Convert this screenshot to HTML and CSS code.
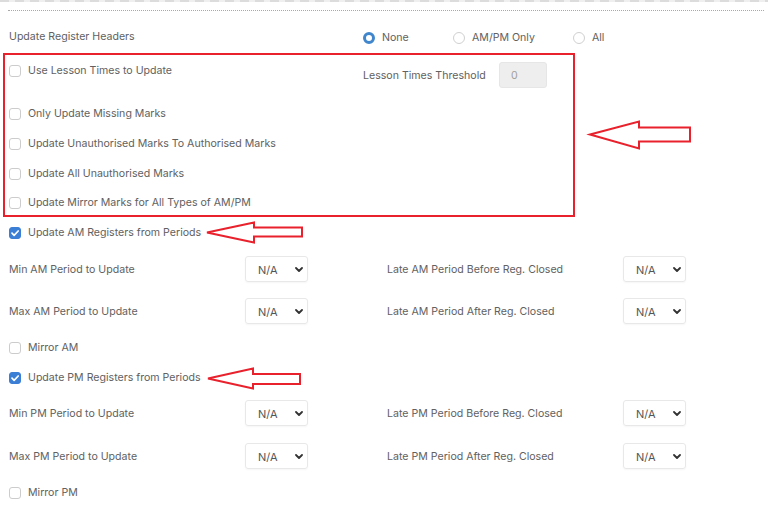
FILE: index.html
```html
<!DOCTYPE html>
<html>
<head>
<meta charset="utf-8">
<link rel="stylesheet" href="styles.css">
</head>
<body>
<div class="page">
  <div class="stripe"></div>
  <div class="rule"></div>

  <div class="row header-row">
    <span class="label">Update Register Headers</span>
    <div class="radios">
      <label class="radio-opt"><span class="radio checked"></span>None</label>
      <label class="radio-opt"><span class="radio"></span>AM/PM Only</label>
      <label class="radio-opt"><span class="radio"></span>All</label>
    </div>
  </div>

  <div class="group">
    <div class="row lesson-row">
      <label class="check-item"><span class="box"></span>Use Lesson Times to Update</label>
      <div class="threshold">
        <span class="label">Lesson Times Threshold</span>
        <span class="num-input">0</span>
      </div>
    </div>
    <div class="row row-check"><label class="check-item"><span class="box"></span>Only Update Missing Marks</label></div>
    <div class="row row-check"><label class="check-item"><span class="box"></span>Update Unauthorised Marks To Authorised Marks</label></div>
    <div class="row row-check"><label class="check-item"><span class="box"></span>Update All Unauthorised Marks</label></div>
    <div class="row row-check last"><label class="check-item"><span class="box"></span>Update Mirror Marks for All Types of AM/PM</label></div>
  </div>

  <div class="row row-check"><label class="check-item"><span class="box on"><svg viewBox="0 0 12 12"><path d="M3 6.2l2.1 2.1L9.2 4" /></svg></span>Update AM Registers from Periods</label></div>

  <div class="row row-select">
    <span class="label">Min AM Period to Update</span>
    <div class="select"><span>N/A</span><svg viewBox="0 0 8 5"><path d="M1 1l3 3 3-3"/></svg></div>
    <span></span>
    <span class="label">Late AM Period Before Reg. Closed</span>
    <div class="select"><span>N/A</span><svg viewBox="0 0 8 5"><path d="M1 1l3 3 3-3"/></svg></div>
  </div>
  <div class="row row-select">
    <span class="label">Max AM Period to Update</span>
    <div class="select"><span>N/A</span><svg viewBox="0 0 8 5"><path d="M1 1l3 3 3-3"/></svg></div>
    <span></span>
    <span class="label">Late AM Period After Reg. Closed</span>
    <div class="select"><span>N/A</span><svg viewBox="0 0 8 5"><path d="M1 1l3 3 3-3"/></svg></div>
  </div>

  <div class="row row-check mirror"><label class="check-item"><span class="box"></span>Mirror AM</label></div>

  <div class="row row-check pm"><label class="check-item"><span class="box on"><svg viewBox="0 0 12 12"><path d="M3 6.2l2.1 2.1L9.2 4" /></svg></span>Update PM Registers from Periods</label></div>

  <div class="row row-select">
    <span class="label">Min PM Period to Update</span>
    <div class="select"><span>N/A</span><svg viewBox="0 0 8 5"><path d="M1 1l3 3 3-3"/></svg></div>
    <span></span>
    <span class="label">Late PM Period Before Reg. Closed</span>
    <div class="select"><span>N/A</span><svg viewBox="0 0 8 5"><path d="M1 1l3 3 3-3"/></svg></div>
  </div>
  <div class="row row-select tall">
    <span class="label">Max PM Period to Update</span>
    <div class="select"><span>N/A</span><svg viewBox="0 0 8 5"><path d="M1 1l3 3 3-3"/></svg></div>
    <span></span>
    <span class="label">Late PM Period After Reg. Closed</span>
    <div class="select"><span>N/A</span><svg viewBox="0 0 8 5"><path d="M1 1l3 3 3-3"/></svg></div>
  </div>

  <div class="row row-check"><label class="check-item"><span class="box"></span>Mirror PM</label></div>

  <svg class="annotations" width="768" height="513" viewBox="0 0 768 513">
    <polygon points="590,134.5 639,121.5 639,127.5 690,127.5 690,141.5 639,141.5 639,148.5" />
    <polygon points="207,232.5 254,222.5 254,227.5 302,227.5 302,236.5 254,236.5 254,242.5" />
    <polygon points="208,378.5 253,368.5 253,374 300,374 300,384 253,384 253,388.5" />
  </svg>
</div>
</body>
</html>
```

FILE: styles.css
```css
* { box-sizing: border-box; }

html, body {
  margin: 0;
  padding: 0;
  background: #ffffff;
}

body {
  font-family: Inter, "Noto Sans", "Liberation Sans", sans-serif;
  font-size: 10.6px;
  color: #616161;
}

.page {
  position: relative;
  width: 768px;
  height: 513px;
  overflow: hidden;
  padding: 0 4px 0 9px;
}

.stripe {
  height: 2px;
  margin: 0 -4px 0 -9px;
  background: repeating-linear-gradient(90deg, #dcdcdc 0 9px, #efefef 9px 15px);
}

.rule {
  margin: 8px 0 0 -1px;
  border-top: 1px dotted #a8a8a8;
}

.row {
  display: flex;
  align-items: center;
  line-height: 14px;
}

.label {
  white-space: nowrap;
}

/* header radios */
.header-row {
  height: 30px;
  margin-top: 10px;
  padding-top: 2px;
  display: grid;
  grid-template-columns: 354px auto;
  align-items: center;
}

.radios {
  display: grid;
  grid-template-columns: 90px 120px auto;
  align-items: center;
  transform: translateY(1px);
}

.radio-opt {
  display: flex;
  align-items: center;
  gap: 7px;
}

.radio {
  width: 12px;
  height: 12px;
  border-radius: 50%;
  border: 1px solid #d0d0d0;
  background: #fff;
}

.radio.checked {
  border: 3.5px solid #3f86cc;
}

/* annotated group */
.group {
  margin: 2px 0 0 -6px;
  width: 572px;
  border: 2px solid #e8212c;
  padding-left: 4px;
}

.lesson-row {
  height: 43px;
  align-items: flex-start;
  padding-top: 9px;
}

.lesson-row .check-item {
  width: 354px;
}

.threshold {
  display: flex;
  align-items: center;
  margin-top: -2px;
}

.threshold .label {
  width: 136px;
  padding-top: 2px;
}

.num-input {
  width: 48px;
  height: 26px;
  border-radius: 3px;
  background: #eeeeee;
  border: 1px solid #e6e6e6;
  color: #a0a0a0;
  padding-left: 11px;
  padding-top: 1px;
  display: flex;
  align-items: center;
}

.row-check {
  height: 30px;
  padding-top: 2px;
}

.row-check.last {
  height: 27px;
}

.row-check.mirror {
  height: 31px;
}

.row-check.pm {
  height: 29px;
}

.check-item {
  display: flex;
  align-items: center;
  gap: 7px;
  white-space: nowrap;
}

.box {
  width: 12px;
  height: 12px;
  border: 1px solid #cccccc;
  border-radius: 3px;
  background: #fff;
  flex: none;
  display: flex;
}

.box.on {
  background: #3b7ed6;
  border-color: #3b7ed6;
}

.box svg {
  width: 12px;
  height: 12px;
  margin: -1px;
}

.box svg path {
  fill: none;
  stroke: #ffffff;
  stroke-width: 1.7;
  stroke-linecap: round;
  stroke-linejoin: round;
}

/* selects */
.row-select {
  height: 42px;
  padding-top: 2px;
  display: grid;
  grid-template-columns: 236px 63px 79px 236px 63px;
  align-items: center;
}

.row-select.tall {
  height: 44px;
  padding-top: 2px;
}

.row-select .label {
  padding-top: 2px;
}

.select {
  height: 26px;
  border: 1px solid #e8e8e8;
  border-radius: 3px;
  box-shadow: 0 1px 2px rgba(0, 0, 0, 0.04);
  display: flex;
  align-items: center;
  justify-content: space-between;
  padding: 1px 4px 0 12px;
  color: #555555;
  font-size: 11px;
}

.select svg {
  width: 8px;
  height: 5px;
}

.select svg path {
  fill: none;
  stroke: #333333;
  stroke-width: 1.8;
  stroke-linecap: round;
  stroke-linejoin: round;
}

/* overlay annotations */
.annotations {
  position: absolute;
  left: 0;
  top: 0;
  pointer-events: none;
}

.annotations polygon {
  fill: #ffffff;
  stroke: #e8212c;
  stroke-width: 2;
  stroke-linejoin: miter;
}
```
